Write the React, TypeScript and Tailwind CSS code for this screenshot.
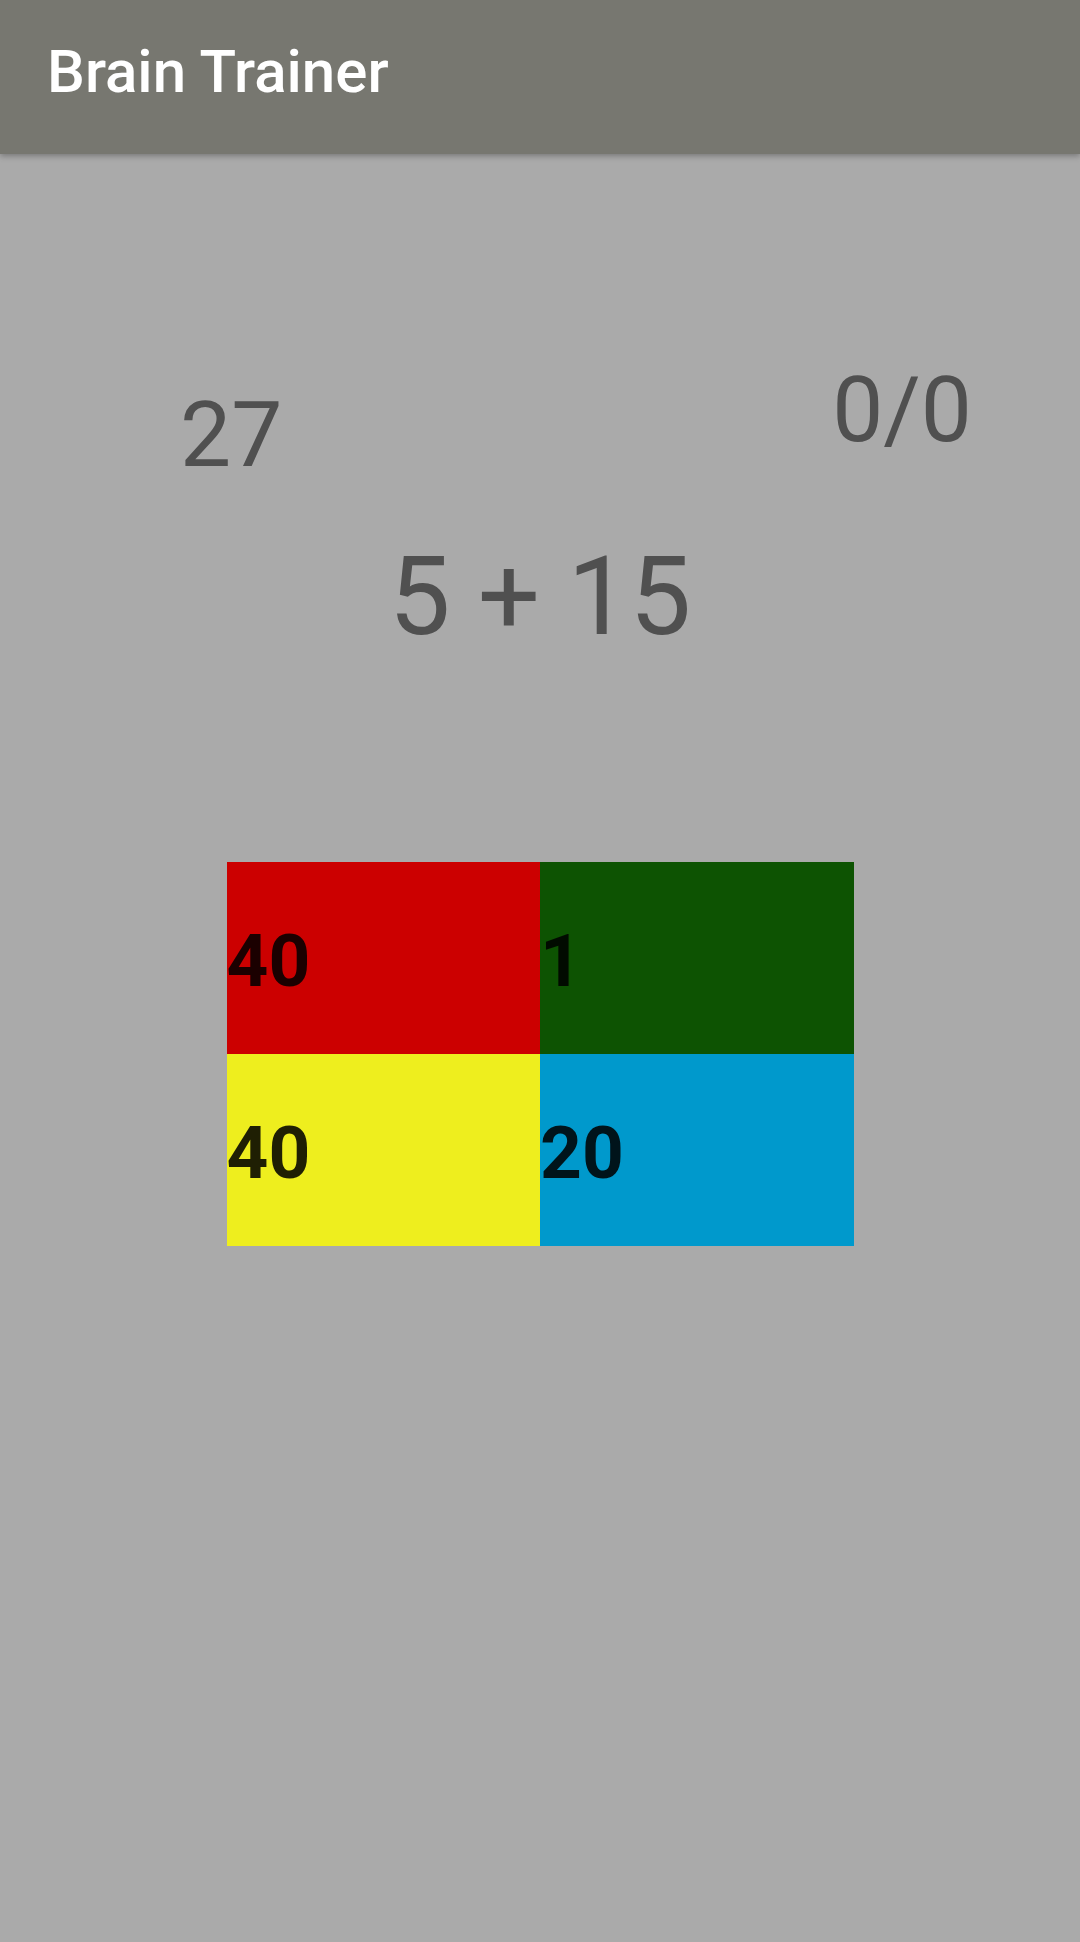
import React from "react";

const cells = [
  { value: "40", bg: "bg-[#cc0000]" },
  { value: "1", bg: "bg-[#0d5302]" },
  { value: "40", bg: "bg-[#eeee1e]" },
  { value: "20", bg: "bg-[#0099cc]" },
];

const App: React.FC = () => {
  return (
    <div className="min-h-screen bg-[#aaaaaa] font-['Roboto',sans-serif]">
      <header className="h-[154px] bg-[#777770] pl-[47px] pt-[42px] shadow-[0_2px_6px_rgba(0,0,0,0.3)] relative z-10">
        <h1 className="text-[60px] leading-none font-medium text-white">Brain Trainer</h1>
      </header>

      <main>
        <div className="flex justify-between items-start pl-[180px] pr-[108px]">
          <div className="mt-[236px] text-[91px] leading-none text-[#505050]">27</div>
          <div className="mt-[211px] text-[91px] leading-none text-[#505050]">0/0</div>
        </div>

        <div className="mt-[61px] text-center text-[110px] leading-none text-[#505050]">5 + 15</div>

        <div className="mt-[210px] mx-auto w-[627px] grid grid-cols-2">
          {cells.map((c, i) => (
            <button
              key={i}
              className={`${c.bg} h-[192px] pt-[6px] flex items-center text-left text-[73px] leading-none font-bold text-black/[0.87]`}
            >
              {c.value}
            </button>
          ))}
        </div>
      </main>
    </div>
  );
};

export default App;
